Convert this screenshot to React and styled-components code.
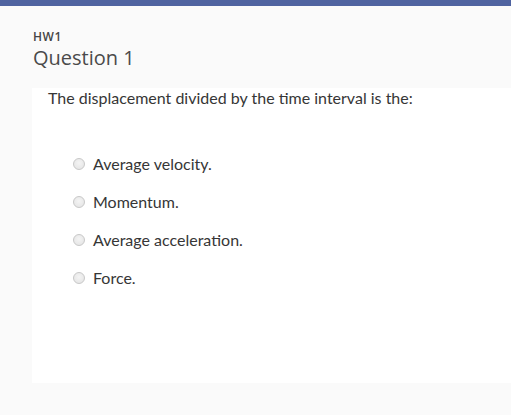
import React from "react";
import styled, { createGlobalStyle } from "styled-components";

const Global = createGlobalStyle`
  html, body { margin: 0; padding: 0; background: #fafafa; }
  body { width: 511px; height: 415px; overflow: hidden; }
`;

const Page = styled.div`
  width: 511px;
  height: 415px;
  background: #fafafa;
  display: flex;
  flex-direction: column;
`;

const TopBar = styled.div`
  height: 6px;
  background: #4f63a0;
  flex-shrink: 0;
`;

const Header = styled.div`
  padding: 23px 0 0 33px;
  height: 57px;
  box-sizing: border-box;
  font-family: "Open Sans", sans-serif;
  color: #3d3d3d;
`;

const Kicker = styled.div`
  font-size: 12px;
  font-weight: 600;
  letter-spacing: 0.6px;
  line-height: 16px;
  color: #444;
`;

const Title = styled.div`
  font-size: 20px;
  line-height: 26px;
  color: #4a4a4a;
`;

const Card = styled.div`
  margin-left: 32px;
  margin-top: 25px;
  height: 295px;
  background: #ffffff;
  padding: 0 0 0 16px;
  box-sizing: border-box;
  font-family: Lato, sans-serif;
  color: #333;
`;

const Prompt = styled.div`
  font-size: 16px;
  line-height: 20px;
  padding-top: 0;
  color: #363636;
`;

const Options = styled.div`
  margin-top: 47px;
  padding-left: 25px;
  display: flex;
  flex-direction: column;
  gap: 20px;
`;

const Option = styled.label`
  display: flex;
  align-items: center;
  gap: 8px;
  font-size: 16px;
  line-height: 18px;
  color: #363636;
`;

const Radio = styled.span`
  width: 12px;
  height: 12px;
  border-radius: 50%;
  box-sizing: border-box;
  border: 1px solid #c8c8c8;
  background: radial-gradient(circle at 50% 40%, #f4f4f4 0%, #e2e2e2 100%);
  flex-shrink: 0;
`;

const options = [
  "Average velocity.",
  "Momentum.",
  "Average acceleration.",
  "Force.",
];

export default function App() {
  return (
    <Page>
      <Global />
      <TopBar />
      <Header>
        <Kicker>HW1</Kicker>
        <Title>Question 1</Title>
      </Header>
      <Card>
        <Prompt>The displacement divided by the time interval is the:</Prompt>
        <Options>
          {options.map((o) => (
            <Option key={o}>
              <Radio />
              {o}
            </Option>
          ))}
        </Options>
      </Card>
    </Page>
  );
}
